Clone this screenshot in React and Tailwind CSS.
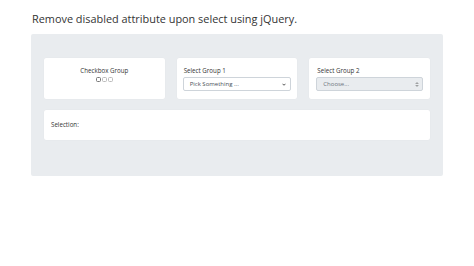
import React from 'react';

function Card({ className = '', children }) {
    return (
        <div className={`bg-white rounded-[2px] shadow-[0_0_1px_rgba(0,0,0,0.08)] ${className}`}>
            {children}
        </div>
    );
}

export default function App() {
    return (
        <div className="w-[474px] h-[266px] bg-white font-['Open_Sans',sans-serif] text-[#212529]">
            <div className="px-[31px] pt-[11px]">
                <h1 className="text-[10.9px] leading-[16px] pl-[1px] text-[#333]">
                    Remove disabled attribute upon select using jQuery.
                </h1>

                <div className="mt-[7px] w-[412px] h-[142px] bg-[#e9ecef] rounded-[2px] px-[13px] pt-[24px]">
                    <div className="grid grid-cols-3 gap-[12px]">
                        {/* Checkbox group */}
                        <Card className="h-[41px] flex flex-col items-center pt-[8px]">
                            <span className="text-[6.2px] leading-[9px] text-[#333]">Checkbox Group</span>
                            <div className="flex gap-[1px] mt-[2px] ml-[1px]">
                                <span className="w-[5px] h-[5px] rounded-[1.5px] border border-[#777] bg-white"></span>
                                <span className="w-[5px] h-[5px] rounded-[1.5px] border border-[#bbb] bg-white"></span>
                                <span className="w-[5px] h-[5px] rounded-[1.5px] border border-[#bbb] bg-white"></span>
                            </div>
                        </Card>

                        {/* Select group 1 */}
                        <Card className="h-[41px] px-[6px] pt-[8px]">
                            <div className="text-[6.2px] leading-[9px] text-[#333] pl-[1px]">Select Group 1</div>
                            <div className="mt-[2px] h-[14px] border border-[#ced4da] rounded-[2px] bg-white flex items-center justify-between pl-[6px] pr-[4px]">
                                <span className="text-[6px] text-[#495057]">Pick Something ...</span>
                                <svg width="4" height="3" viewBox="0 0 10 8">
                                    <path d="M1 2 L5 6 L9 2" stroke="#444" strokeWidth="2.4" fill="none" />
                                </svg>
                            </div>
                        </Card>

                        {/* Select group 2 */}
                        <Card className="h-[41px] px-[7px] pt-[8px]">
                            <div className="text-[6.2px] leading-[9px] text-[#333] pl-[1px]">Select Group 2</div>
                            <div className="mt-[2px] h-[14px] border border-[#ced4da] rounded-[2px] bg-[#e9ecef] flex items-center justify-between pl-[6px] pr-[3px]">
                                <span className="text-[6px] text-[#6c757d]">Choose...</span>
                                <svg width="4" height="5" viewBox="0 0 10 12">
                                    <path d="M2 4.5 L5 1.5 L8 4.5 M2 7.5 L5 10.5 L8 7.5" stroke="#555" strokeWidth="2" fill="none" />
                                </svg>
                            </div>
                        </Card>
                    </div>

                    <Card className="mt-[11px] h-[30px] flex items-center px-[7px]">
                        <span className="text-[6.2px] text-[#333]">Selection:</span>
                    </Card>
                </div>
            </div>
        </div>
    );
}
